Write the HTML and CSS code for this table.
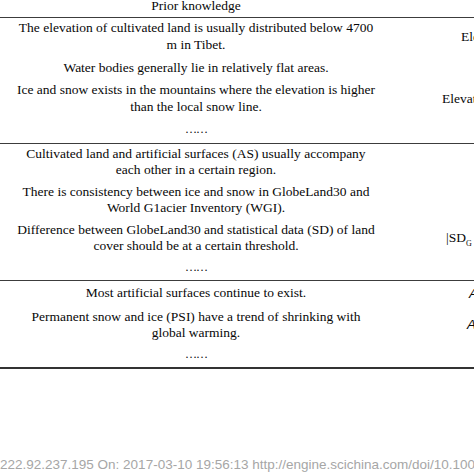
FILE: index.html
```html
<!DOCTYPE html>
<html lang="en">
<head>
<meta charset="utf-8">
<title>Prior knowledge table</title>
<link rel="stylesheet" href="styles.css">
</head>
<body>
<div class="page">
  <div class="table">
    <div class="row head">
      <div class="c1">Prior knowledge</div>
      <div class="c2">Rule</div>
    </div>
    <div class="group g1">
      <div class="row">
        <div class="c1">The elevation of cultivated land is usually distributed below 4700<br>m in Tibet.</div>
        <div class="c2 off-69">Elevation<sub>CL</sub> &lt; 4700 m</div>
      </div>
      <div class="row">
        <div class="c1">Water bodies generally lie in relatively flat areas.</div>
        <div class="c2 off-200">Slope<sub>WB</sub> &lt; T</div>
      </div>
      <div class="row">
        <div class="c1">Ice and snow exists in the mountains where the elevation is higher<br>than the local snow line.</div>
        <div class="c2 off-50">Elevation<sub>PSI</sub> &gt; snow line</div>
      </div>
      <div class="row">
        <div class="c1 dots">&hellip;&hellip;</div>
        <div class="c2"></div>
      </div>
    </div>
    <div class="group g2">
      <div class="row">
        <div class="c1">Cultivated land and artificial surfaces (AS) usually accompany<br>each other in a certain region.</div>
        <div class="c2 off-200">CL &#8745; AS</div>
      </div>
      <div class="row">
        <div class="c1">There is consistency between ice and snow in GlobeLand30 and<br>World G1acier Inventory (WGI).</div>
        <div class="c2 off-200">PSI &#8776; WGI</div>
      </div>
      <div class="row">
        <div class="c1">Difference between GlobeLand30 and statistical data (SD) of land<br>cover should be at a certain threshold.</div>
        <div class="c2 off-54">|SD<sub>G</sub> &minus; SD| &lt; T</div>
      </div>
      <div class="row">
        <div class="c1 dots">&hellip;&hellip;</div>
        <div class="c2"></div>
      </div>
    </div>
    <div class="group g3">
      <div class="row first">
        <div class="c1">Most artificial surfaces continue to exist.</div>
        <div class="c2 off-77 sans">AS<sub>t1</sub> &#8838; AS<sub>t2</sub></div>
      </div>
      <div class="row">
        <div class="c1">Permanent snow and ice (PSI) have a trend of shrinking with<br>global warming.</div>
        <div class="c2 off-75 sans">Area<sub>PSI,t2</sub> &lt; Area<sub>PSI,t1</sub></div>
      </div>
      <div class="row">
        <div class="c1 dots">&hellip;&hellip;</div>
        <div class="c2"></div>
      </div>
    </div>
  </div>
  <div class="footer">222.92.237.195 On: 2017-03-10 19:56:13 http://engine.scichina.com/doi/10.1007/s11430-016-5124-x</div>
</div>
</body>
</html>
```
FILE: styles.css
```css
html, body {
  margin: 0;
  padding: 0;
  background: #ffffff;
}

body {
  width: 474px;
  height: 474px;
  overflow: hidden;
}

.page {
  width: 474px;
  height: 474px;
  overflow: hidden;
  display: flex;
  flex-direction: column;
}

.table {
  width: 760px;
  margin-top: -5px;
  font-family: "Liberation Serif", "Times New Roman", serif;
  font-size: 13.5px;
  line-height: 16.1px;
  color: #080808;
}

.row {
  display: grid;
  grid-template-columns: 392px 1fr;
  align-items: center;
}

.c1 {
  text-align: center;
  padding: 2.75px 0;
  white-space: nowrap;
}

.c2 {
  text-align: left;
  white-space: nowrap;
}

.c2 sub {
  font-size: 8px;
  line-height: 0;
}

.head .c2 {
  padding-left: 200px;
}

.group {
  border-top: 1.5px solid #3c3c3c;
  padding: 0 0 1.5px;
}

.g1 {
  padding: 0 0 1.5px;
  line-height: 16.9px;
}

.g2 {
  padding: 0 0 2px;
}

.g3 {
  border-bottom: 2px solid #333333;
  padding: 1.5px 0 1.5px;
}

.g3 .first .c1 {
  padding-bottom: 4.25px;
}

.dots {
  letter-spacing: -1px;
  font-size: 12px;
}

.sans {
  font-family: "Liberation Sans", Arial, sans-serif;
  font-style: italic;
}

.off-50 { padding-left: 50px; }
.off-54 { padding-left: 54px; }
.off-69 { padding-left: 69px; }
.off-75 { padding-left: 75px; }
.off-77 { padding-left: 77px; }
.off-200 { padding-left: 200px; }

.footer {
  margin-top: auto;
  padding-bottom: 1px;
  font-family: "Liberation Sans", Arial, sans-serif;
  font-size: 13.5px;
  line-height: 16px;
  color: #a6a6a6;
  white-space: nowrap;
}
```
